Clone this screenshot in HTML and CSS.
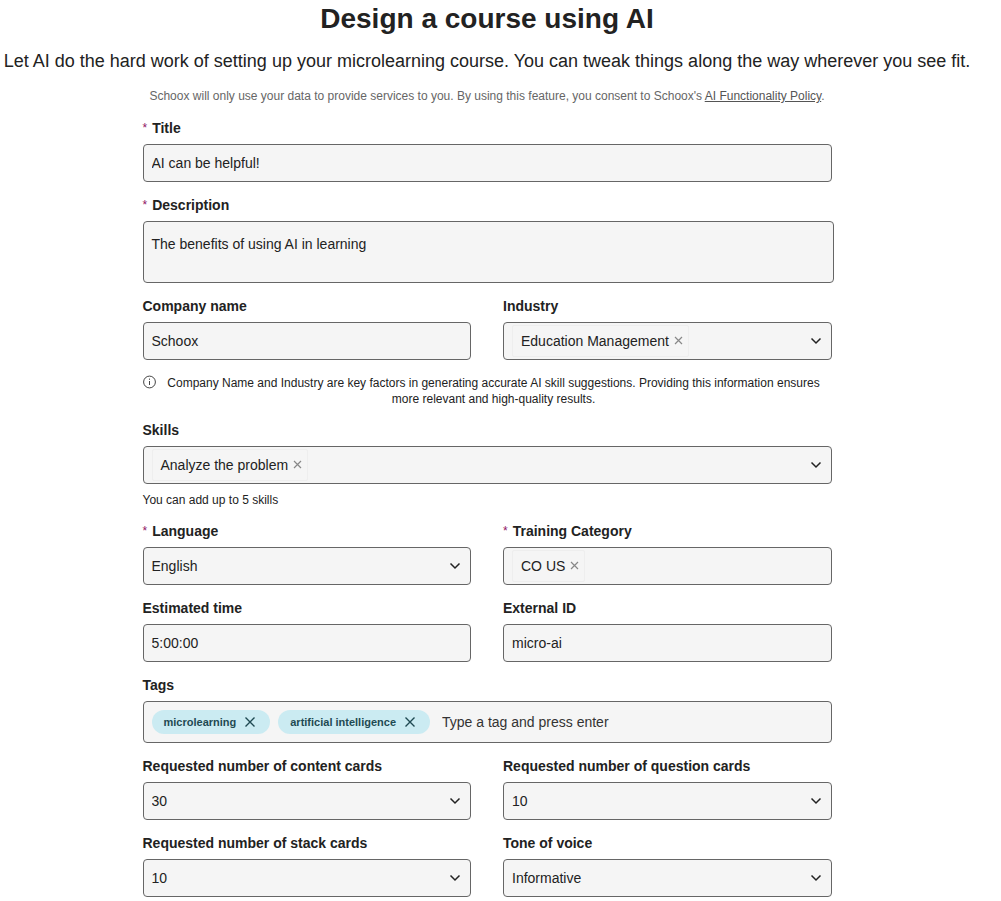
FILE: index.html
```html
<!DOCTYPE html>
<html lang="en">

<head>
  <meta charset="UTF-8">
  <meta name="viewport" content="width=device-width, initial-scale=1.0">
  <title>Design a course using AI</title>
  <link rel="stylesheet" href="styles.css">
</head>

<body>
  <main class="page">
    <header class="intro">
      <h1>Design a course using AI</h1>
      <p class="subtitle">Let AI do the hard work of setting up your microlearning course. You can tweak things along the way wherever you see fit.</p>
      <p class="policy">Schoox will only use your data to provide services to you. By using this feature, you consent to Schoox's <a href="#">AI Functionality Policy</a>.</p>
    </header>

    <form class="course-form">
      <div class="field">
        <label for="title"><span class="required">*</span>Title</label>
        <input class="control" type="text" id="title" value="AI can be helpful!" required>
      </div>

      <div class="field">
        <label for="description"><span class="required">*</span>Description</label>
        <textarea class="control" id="description" required>The benefits of using AI in learning</textarea>
      </div>

      <div class="row">
        <div class="field">
          <label for="company">Company name</label>
          <input class="control" type="text" id="company" value="Schoox">
        </div>
        <div class="field">
          <label for="industry">Industry</label>
          <div class="control multi">
            <span class="chip">Education Management
              <button type="button" class="chip-remove" aria-label="Remove Education Management"><svg width="9" height="10" viewBox="0 0 9 10"><path d="M1 1l7 7M8 1l-7 7"/></svg></button>
            </span>
            <input class="multi-input" type="text" id="industry">
            <svg class="chevron" width="12" height="8" viewBox="0 0 12 8"><path d="M1.5 1.5L6 6l4.5-4.5"/></svg>
          </div>
        </div>
      </div>

      <div class="info">
        <svg class="info-icon" width="13" height="14" viewBox="0 0 13 14"><circle cx="6.5" cy="7" r="5.9"/><path d="M6.5 6v4M6.5 3.6v1.2"/></svg>
        <p>Company Name and Industry are key factors in generating accurate AI skill suggestions. Providing this information ensures more relevant and high-quality results.</p>
      </div>

      <div class="field">
        <label for="skills">Skills</label>
        <div class="control multi">
          <span class="chip">Analyze the problem
            <button type="button" class="chip-remove" aria-label="Remove Analyze the problem"><svg width="9" height="10" viewBox="0 0 9 10"><path d="M1 1l7 7M8 1l-7 7"/></svg></button>
          </span>
          <input class="multi-input" type="text" id="skills">
          <svg class="chevron" width="12" height="8" viewBox="0 0 12 8"><path d="M1.5 1.5L6 6l4.5-4.5"/></svg>
        </div>
        <p class="hint">You can add up to 5 skills</p>
      </div>

      <div class="row">
        <div class="field">
          <label for="language"><span class="required">*</span>Language</label>
          <div class="select">
            <select class="control" id="language" required>
              <option>English</option>
            </select>
            <svg class="chevron" width="12" height="8" viewBox="0 0 12 8"><path d="M1.5 1.5L6 6l4.5-4.5"/></svg>
          </div>
        </div>
        <div class="field">
          <label for="category"><span class="required">*</span>Training Category</label>
          <div class="control multi">
            <span class="chip">CO US
              <button type="button" class="chip-remove" aria-label="Remove CO US"><svg width="9" height="10" viewBox="0 0 9 10"><path d="M1 1l7 7M8 1l-7 7"/></svg></button>
            </span>
            <input class="multi-input" type="text" id="category">
          </div>
        </div>
      </div>

      <div class="row">
        <div class="field">
          <label for="time">Estimated time</label>
          <input class="control" type="text" id="time" value="5:00:00">
        </div>
        <div class="field">
          <label for="external-id">External ID</label>
          <input class="control" type="text" id="external-id" value="micro-ai">
        </div>
      </div>

      <div class="field">
        <label for="tags">Tags</label>
        <div class="control tags">
          <span class="tag">microlearning
            <button type="button" class="tag-remove" aria-label="Remove microlearning"><svg width="12" height="12" viewBox="0 0 12 12"><path d="M1.5 1.5l9 9M10.5 1.5l-9 9"/></svg></button>
          </span>
          <span class="tag">artificial intelligence
            <button type="button" class="tag-remove" aria-label="Remove artificial intelligence"><svg width="12" height="12" viewBox="0 0 12 12"><path d="M1.5 1.5l9 9M10.5 1.5l-9 9"/></svg></button>
          </span>
          <input class="multi-input" type="text" id="tags" placeholder="Type a tag and press enter">
        </div>
      </div>

      <div class="row">
        <div class="field">
          <label for="content-cards">Requested number of content cards</label>
          <div class="select">
            <select class="control" id="content-cards">
              <option>30</option>
            </select>
            <svg class="chevron" width="12" height="8" viewBox="0 0 12 8"><path d="M1.5 1.5L6 6l4.5-4.5"/></svg>
          </div>
        </div>
        <div class="field">
          <label for="question-cards">Requested number of question cards</label>
          <div class="select">
            <select class="control" id="question-cards">
              <option>10</option>
            </select>
            <svg class="chevron" width="12" height="8" viewBox="0 0 12 8"><path d="M1.5 1.5L6 6l4.5-4.5"/></svg>
          </div>
        </div>
      </div>

      <div class="row">
        <div class="field">
          <label for="stack-cards">Requested number of stack cards</label>
          <div class="select">
            <select class="control" id="stack-cards">
              <option>10</option>
            </select>
            <svg class="chevron" width="12" height="8" viewBox="0 0 12 8"><path d="M1.5 1.5L6 6l4.5-4.5"/></svg>
          </div>
        </div>
        <div class="field">
          <label for="tone">Tone of voice</label>
          <div class="select">
            <select class="control" id="tone">
              <option>Informative</option>
            </select>
            <svg class="chevron" width="12" height="8" viewBox="0 0 12 8"><path d="M1.5 1.5L6 6l4.5-4.5"/></svg>
          </div>
        </div>
      </div>
    </form>
  </main>
</body>

</html>
```
FILE: styles.css
```css
* {
  margin: 0;
  padding: 0;
  box-sizing: border-box;
}

body {
  background: #fff;
  color: #222;
  font-family: "Liberation Sans", Arial, sans-serif;
  font-size: 14px;
  line-height: 16px;
}

.page {
  padding: 3px 27px 0 0;
}

.intro {
  text-align: center;
}

h1 {
  font-size: 28px;
  line-height: 32px;
}

.subtitle {
  margin-top: 14px;
  font-size: 18px;
  line-height: 24px;
}

.policy {
  margin: 15px 0 16px;
  font-size: 12px;
  color: #666;
}

.policy a {
  color: #555;
}

.course-form {
  max-width: 689px;
  margin: 0 auto;
  display: flex;
  flex-direction: column;
  gap: 15px;
}

.row {
  display: grid;
  grid-template-columns: 1fr 1fr;
  gap: 32px;
}

.field {
  display: flex;
  flex-direction: column;
  gap: 8px;
  min-width: 0;
}

label {
  display: flex;
  gap: 5px;
  font-weight: bold;
}

.required {
  color: #8f1565;
  font-size: 12px;
  font-weight: normal;
}

.control {
  width: 100%;
  height: 38px;
  padding: 0 8px;
  border: 1px solid #666;
  border-radius: 4px;
  background: #f5f5f5;
  color: #222;
  font: inherit;
}

textarea.control {
  width: calc(100% + 2px);
  height: 62px;
  padding: 14px 8px;
  resize: none;
  display: block;
}

/* the arrow shares the grid cell with the select */
.select {
  display: grid;
  align-items: center;
}

.select > * {
  grid-area: 1 / 1;
}

.select select {
  appearance: none;
}

.chevron {
  justify-self: end;
  margin-right: 10px;
  fill: none;
  stroke: #222;
  stroke-width: 1.5;
  pointer-events: none;
}

.multi .chevron {
  flex-shrink: 0;
  margin-right: 1px;
}

.multi,
.tags {
  display: flex;
  align-items: center;
}

.chip {
  display: flex;
  align-items: center;
  gap: 5px;
  height: 32px;
  padding: 0 5px 0 8px;
  border: 1px solid #eee;
  border-radius: 2px;
  white-space: nowrap;
}

.multi-input {
  flex: 1;
  min-width: 0;
  border: none;
  outline: none;
  background: none;
  color: inherit;
  font: inherit;
}

.multi-input::placeholder {
  color: #333;
}

.chip-remove,
.tag-remove {
  display: flex;
  border: none;
  background: none;
  cursor: pointer;
}

.chip-remove svg {
  stroke: #888;
  stroke-width: 1.2;
}

.tags {
  height: 42px;
  gap: 8px;
}

.tags .multi-input {
  padding-left: 4px;
}

.tag {
  display: flex;
  align-items: center;
  gap: 8px;
  height: 24px;
  padding: 0 14px 0 12px;
  border-radius: 12px;
  background: #cbebf2;
  color: #1f4a52;
  font-size: 11px;
  font-weight: bold;
  white-space: nowrap;
}

.tag-remove svg {
  stroke: #1f4a52;
  stroke-width: 1.4;
}

.info {
  display: flex;
  gap: 11px;
  padding-right: 11px;
  font-size: 12px;
  text-align: center;
}

.info p {
  flex: 1;
}

.info-icon {
  flex-shrink: 0;
  fill: none;
  stroke: #444;
}

.hint {
  font-size: 12px;
}
```
